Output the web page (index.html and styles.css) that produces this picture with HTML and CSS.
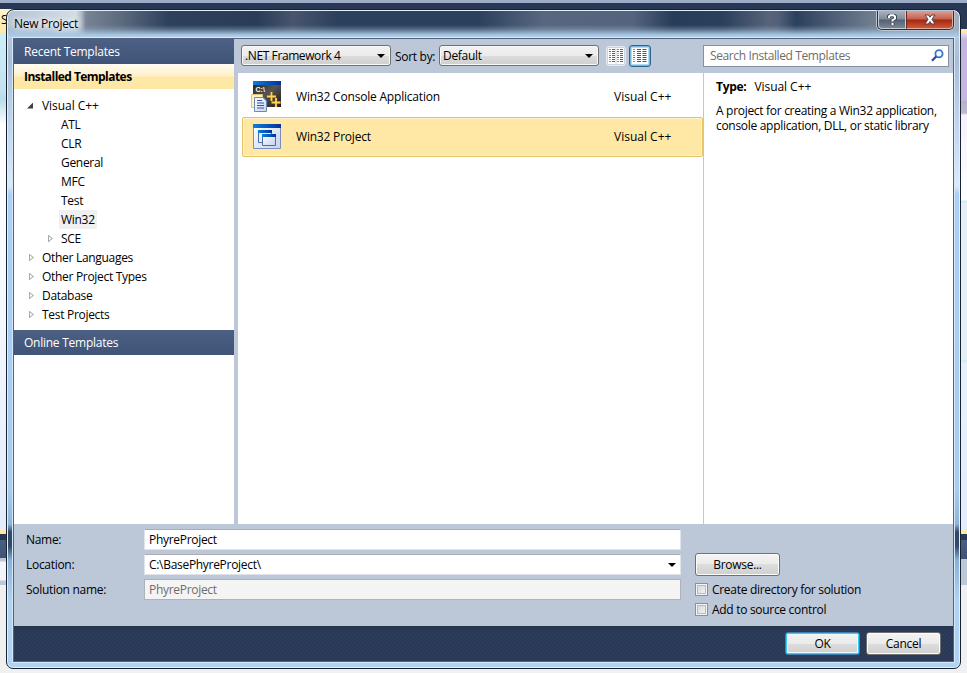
FILE: index.html
```
<!DOCTYPE html>
<html lang="en">
<head>
    <meta charset="UTF-8">
    <title>New Project</title>
    <link rel="stylesheet" href="styles.css">
</head>
<body>
<div class="desktop">
    <div class="behind">
        <div class="behindLeft">S</div>
        <div class="behindRight"></div>
    </div>

    <div class="window">
        <div class="titlebar">
            <div class="title">New Project</div>
            <div class="controls">
                <button class="help">
                    <svg width="12" height="12" viewBox="0 0 12 12"><path d="M3 4V2.5L4.5 1.2H7.5L9 2.5V4.5L6.5 6.3V7.5M6.5 9V11" fill="none" stroke="#3f4858" stroke-width="4"/><path d="M3 4V2.5L4.5 1.2H7.5L9 2.5V4.5L6.5 6.3V7.5M6.5 9V11" fill="none" stroke="#fff" stroke-width="2"/></svg>
                </button>
                <button class="close">
                    <svg width="12" height="11" viewBox="0 0 12 11"><path d="M1 1H4.3L6 3.2 7.7 1H11L8 5.3 11 10H7.7L6 7.6 4.3 10H1L4 5.3Z" fill="#fff" stroke="#4f4350" stroke-width="1"/></svg>
                </button>
            </div>
        </div>

        <div class="client">
            <div class="panes">
                <div class="sidebar">
                    <div class="band">Recent Templates</div>
                    <div class="band active">Installed Templates</div>
                    <ul class="tree">
                        <li class="open"><span>Visual C++</span></li>
                        <li class="sub"><span>ATL</span></li>
                        <li class="sub"><span>CLR</span></li>
                        <li class="sub"><span>General</span></li>
                        <li class="sub"><span>MFC</span></li>
                        <li class="sub"><span>Test</span></li>
                        <li class="sub selected"><span>Win32</span></li>
                        <li class="sub closed"><span>SCE</span></li>
                        <li class="closed"><span>Other Languages</span></li>
                        <li class="closed"><span>Other Project Types</span></li>
                        <li class="closed"><span>Database</span></li>
                        <li class="closed"><span>Test Projects</span></li>
                    </ul>
                    <div class="band">Online Templates</div>
                </div>

                <div class="main">
                    <div class="toolbar">
                        <div class="combo framework">.NET Framework 4</div>
                        <label>Sort by:</label>
                        <div class="combo sort">Default</div>
                        <button class="view small">
                            <svg width="16" height="16" viewBox="0 0 16 16">
                                <path d="M0 0H7.5V16H0ZM8.5 0H16V16H8.5Z" fill="#fff"/>
                                <path d="M2 1V15M10 1V15" stroke="#4fa58c" stroke-width="2" stroke-dasharray="1 5"/>
                                <path d="M2 3V15M10 3V15" stroke="#d8402c" stroke-width="2" stroke-dasharray="1 5"/>
                                <path d="M2 5V15M10 5V15" stroke="#e0b040" stroke-width="2" stroke-dasharray="1 5"/>
                                <path d="M5.5 1V15M13.5 1V15" stroke="#4a5cc0" stroke-width="3" stroke-dasharray="1 1"/>
                            </svg>
                        </button>
                        <button class="view medium">
                            <svg width="16" height="16" viewBox="0 0 16 16">
                                <path d="M0 0H16V16H0Z" fill="#fff"/>
                                <path d="M2 1V15" stroke="#4fa58c" stroke-width="2" stroke-dasharray="1 5"/>
                                <path d="M2 3V15" stroke="#d8402c" stroke-width="2" stroke-dasharray="1 5"/>
                                <path d="M2 5V15" stroke="#e0b040" stroke-width="2" stroke-dasharray="1 5"/>
                                <path d="M7 1V15M12.5 1V15" stroke="#3c4fb4" stroke-width="4" stroke-dasharray="1 1"/>
                            </svg>
                        </button>
                        <div class="search">
                            <span>Search Installed Templates</span>
                            <svg width="13" height="13" viewBox="0 0 13 13"><circle cx="8" cy="4.8" r="3.6" fill="#f4faff" stroke="#3a76c8" stroke-width="1.8"/><path d="M5.2 7.5L1 11.8" stroke="#2848a0" stroke-width="2.2"/></svg>
                        </div>
                    </div>

                    <div class="content">
                        <div class="list">
                            <div class="item">
                                <svg class="icon" width="32" height="32" viewBox="0 0 32 32">
                                    <defs>
                                        <linearGradient id="bar"><stop offset="0" stop-color="#0a80dc"/><stop offset="1" stop-color="#04309c"/></linearGradient>
                                        <linearGradient id="dark" x2="1" y2="1"><stop offset="0" stop-color="#222"/><stop offset=".5" stop-color="#555"/><stop offset="1" stop-color="#1c1c1c"/></linearGradient>
                                        <linearGradient id="paper" x2="1" y2="1"><stop offset="0" stop-color="#fff"/><stop offset="1" stop-color="#c4d3ee"/></linearGradient>
                                    </defs>
                                    <path d="M2 1H30V27H2Z" fill="url(#dark)"/>
                                    <path d="M2 1H30V5H2Z" fill="url(#bar)"/>
                                    <text x="4.5" y="12" class="prompt">C:\</text>
                                    <path d="M.5 14.5H11.5V27.5H.5Z" fill="#fff3b8" stroke="#dcc37a"/>
                                    <path d="M3.5 17.5H12L15.5 21V31.5H3.5Z" fill="url(#paper)" stroke="#7288b4"/>
                                    <path d="M6 20.5H11M6 23H13M6 25.5H13M6 28H13" stroke="#2c56b4"/>
                                    <path d="M20.5 12V21M16 16.5H25M25 18V27M20.5 22.5H29.5" stroke="#5f4310" stroke-width="3"/>
                                    <path d="M20.5 12V21M16 16.5H25M25 18V27M20.5 22.5H29.5" stroke="#ffd35a" stroke-width="1.8"/>
                                </svg>
                                <div class="name">Win32 Console Application</div>
                                <div class="lang">Visual C++</div>
                            </div>
                            <div class="item selected">
                                <svg class="icon" width="32" height="32" viewBox="0 0 32 32">
                                    <path d="M2.5 4.5H29.5V28.5H2.5Z" fill="url(#paper)" stroke="#7890b8"/>
                                    <path d="M2 4H30V8H2Z" fill="url(#bar)"/>
                                    <path d="M7.5 10.5H20.5V22.5H7.5Z" fill="#e4edfa" stroke="#4b6ca8"/>
                                    <path d="M7 10H21V13H7Z" fill="url(#bar)"/>
                                    <path d="M11.5 14.5H24.5V25.5H11.5Z" fill="url(#paper)" stroke="#4b6ca8"/>
                                    <path d="M11 14H25V17H11Z" fill="url(#bar)"/>
                                </svg>
                                <div class="name">Win32 Project</div>
                                <div class="lang">Visual C++</div>
                            </div>
                        </div>
                        <div class="details">
                            <div class="type"><b>Type:</b><span>Visual C++</span></div>
                            <p>A project for creating a Win32 application,<br>console application, DLL, or static library</p>
                        </div>
                    </div>
                </div>
            </div>

            <div class="form">
                <div class="fields">
                    <label>Name:</label>
                    <div class="input">PhyreProject</div>
                    <label>Location:</label>
                    <div class="input dropdown">C:\BasePhyreProject\</div>
                    <label>Solution name:</label>
                    <div class="input disabled">PhyreProject</div>
                </div>
                <div class="options">
                    <button class="button browse">Browse...</button>
                    <div class="check"><i></i>Create directory for solution</div>
                    <div class="check"><i></i>Add to source control</div>
                </div>
            </div>

            <div class="footer">
                <button class="button default">OK</button>
                <button class="button">Cancel</button>
            </div>
        </div>
    </div>
</div>
</body>
</html>
```
FILE: styles.css
```
* {
    box-sizing: border-box;
}
body {
    margin: 0;
    font-family: "Open Sans", "Noto Sans", sans-serif;
    font-size: 12px;
    letter-spacing: -0.3px;
    color: #000;
    overflow: hidden;
}
button {
    font: inherit;
    letter-spacing: inherit;
    padding: 0;
}
.desktop {
    width: 967px;
    height: 673px;
    display: grid;
    padding: 9px 6px 4px;
    position: relative;
    background: linear-gradient(#9dadc8 3px, #293955 3px, #293955 9px, #f0f0f0 9px);
}
/* the application showing round the edges of the dialog */
.behind {
    position: absolute;
    inset: 0;
    display: flex;
    justify-content: space-between;
}
.behindLeft {
    width: 14px;
    margin-top: 9px;
    padding: 2px 0 0 1px;
    background: linear-gradient(#fff4d0, #ffe8a6 24px, #cdeef8 24px, #c4e2ee 80px, #b9dcea 90px, #fff 116px, #f7faff 260px, #e3ecfc 521px, #ffe8a6 521px, #ffe8a6 525px, #293955 525px, #293955 531px, #4a5e82 531px, #3f5277 549px, #bcc7d8 549px, #bcc7d8 552px, #f4f5fb 553px, #f4f5fb 571px, #bcc7d8 572px, #bcc7d8 576px, #f0f0f0 576px);
}
.behindRight {
    width: 14px;
    background: linear-gradient(#9dadc8 3px, #293955 3px, #293955 29px, #ffe8a6 29px, #ffe8a6 33px, #eadcf6 33px, #c5b4e0 40px, #c6b6e2 100px, #b9b0cc 101px, #c0b8cf 113px, #f6f0fa 115px, #fff 200px, #c8ecf4 201px, #e5edf5 203px, #e5edf5 360px, #c8ecf4 361px, #e8effc 363px, #e3ecfc 530px, #ffe8a6 530px, #ffe8a6 534px, #293955 534px, #293955 540px, #4a5e82 540px, #3f5277 559px, #bcc7d8 559px, #bcc7d8 585px, #f0f0f0 585px);
}
.window {
    position: relative;
    width: 955px;
    height: 660px;
    padding: 0 6px 6px;
    border: 1px solid #17222f;
    border-radius: 8px 8px 7px 7px;
    box-shadow: inset 0 0 0 1px #e2f0fb;
    background:
        linear-gradient(#c5d2df, #a9bdd8 50px, #c6daf4 130px, #dce9fa 176px, #a9d0f8 184px, #a8ccf0 480px, #8eb4dc 514px, #34496a 522px, #34496a 536px, #8ab0d8 550px, #b0d2f4 590px, #b0d2f4);
}
.titlebar {
    height: 27px;
    margin: 1px -5px 0;
    padding-left: 6px;
    display: flex;
    justify-content: space-between;
    border-radius: 6px 6px 0 0;
    background:
        linear-gradient(transparent 14px, rgba(150, 175, 200, .35) 18px, #a8c6e2 24px, #b4d4f0),
        linear-gradient(90deg, #b4c3d3, #d4dde4 68px, #b4bdc7 73px, #788395 78px, #5f6d80 110px, #2d415d 160px, #293d58 250px, #48556c 285px, #2b405c 330px, #2b405c 470px, #58677f 535px, #55647e 625px, #263c58 665px, #2b405c 715px, #566378 760px, #53607a 770px, #2b405c 788px, #6d7a8d 860px, #a2adba 945px);
}
.title {
    margin-top: 4px;
    text-shadow: 0 0 6px #fff, 0 0 8px #fff;
}
.controls {
    display: flex;
    width: 77px;
    height: 19px;
    margin-right: 5px;
    border: 1px solid #26313f;
    border-top: 0;
    border-radius: 0 0 5px 5px;
    overflow: hidden;
    box-shadow: 0 0 0 1px #b8c5d2;
}
.controls button {
    display: flex;
    align-items: center;
    justify-content: center;
    border: 1px solid #c6cdd6;
    border-top: 0;
}
.help {
    width: 28px;
    border-radius: 0 0 0 4px;
    background: linear-gradient(#a9b1bc, #818c9a 8px, #536070 9px, #7c8796);
}
.close {
    flex: 1;
    border-radius: 0 0 4px 0;
    background: linear-gradient(#dca095, #c4604e 8px, #a22714 9px, #cf5735);
}
.controls .close {
    border-color: #e0aba0;
    border-left-color: #6b2820;
}
.client {
    height: 624px;
    border: 1px solid #53627a;
    box-shadow: 0 0 0 1px #d5e8f8;
    display: flex;
    flex-direction: column;
    background: #bcc7d8;
}
.panes {
    height: 485px;
    display: flex;
    gap: 4px;
}
.sidebar {
    width: 220px;
    background: #fff;
}
.band {
    height: 25px;
    padding-left: 10px;
    line-height: 25px;
    color: #fff;
    letter-spacing: -0.25px;
    background: linear-gradient(#4c5f84, #405478);
}
.band.active {
    color: #000;
    font-weight: bold;
    letter-spacing: -0.55px;
    background: linear-gradient(#fffcf2, #fff1ca 12px, #ffe8a6 13px, #ffe8a6);
}
.tree {
    list-style: none;
    margin: 0;
    padding: 7px 0 6px 12px;
}
.tree li {
    height: 19px;
    line-height: 19px;
    display: flex;
    align-items: center;
}
.tree li::before {
    content: "";
    width: 14px;
}
.tree span {
    padding: 0 2px;
}
.tree .sub {
    padding-left: 19px;
}
.tree .selected span {
    background: #f0f0f0;
}
.tree .open {
    letter-spacing: -0.05px;
}
.tree .open::before {
    width: 6px;
    height: 6px;
    margin: 0 7px 0 1px;
    background: #404040;
    clip-path: polygon(100% 0, 100% 100%, 0 100%);
}
.tree .closed::before {
    width: 5px;
    height: 8px;
    margin: 0 6px 0 3px;
    background: #aaa;
    clip-path: polygon(0 0, 100% 50%, 0 100%, 0 0, 1px 2px, 1px 6px, 3.5px 50%, 1px 2px);
}
.main {
    flex: 1;
}
.toolbar {
    height: 34px;
    display: flex;
    align-items: center;
    padding: 0 4px 1px 3px;
}
.combo {
    height: 21px;
    line-height: 19px;
    padding: 0 5px 0 3px;
    display: flex;
    align-items: center;
    justify-content: space-between;
    border: 1px solid #707070;
    border-radius: 3px;
    box-shadow: inset 0 0 0 1px #f8f8f8;
    background: linear-gradient(#f2f2f2, #ebebeb 50%, #dddddd 50%, #cfcfcf);
}
.combo::after, .dropdown::after {
    content: "";
    border: 4px solid transparent;
    border-top-color: #000;
    border-bottom: 0;
}
.framework {
    width: 150px;
    letter-spacing: -0.4px;
}
.sort {
    width: 160px;
}
.toolbar label {
    width: 48px;
    padding: 1px 0 0 4px;
}
.view {
    display: flex;
    align-items: center;
    justify-content: center;
    border-radius: 3px;
}
.small {
    width: 20px;
    height: 20px;
    margin: 0 3px 0 7px;
    border: 1px solid #e6eaf0;
    background: #cbd3e0;
}
.medium {
    width: 22px;
    height: 22px;
    border: 1px solid #2c628b;
    box-shadow: inset 0 0 1px 1px #6fb4d8;
    background: #b4dff4;
}
.search {
    width: 246px;
    height: 22px;
    margin-left: auto;
    padding: 0 4px 0 6px;
    display: flex;
    align-items: center;
    justify-content: space-between;
    letter-spacing: -0.38px;
    border: 1px solid #8591a2;
    background: #fff;
    color: #6d6d6d;
}
.content {
    height: 451px;
    display: flex;
    background: #fff;
}
.list {
    width: 465px;
    padding: 4px 0 0 4px;
}
.item {
    height: 40px;
    padding: 0 0 2px 9px;
    display: flex;
    align-items: center;
    border: 1px solid transparent;
    border-radius: 2px;
}
.item.selected {
    background: #ffe8a6;
    border-color: #e5c365;
    box-shadow: inset 0 0 0 1px #fff3cf;
}
.icon {
    margin: 0 13px 0 -1px;
}
.name {
    width: 318px;
    letter-spacing: -0.2px;
}
.lang {
    letter-spacing: 0;
}
.prompt {
    font: bold 7px "Liberation Sans", sans-serif;
    letter-spacing: 0;
    fill: #fff;
}
.details {
    flex: 1;
    padding: 6px 0 0 12px;
    border-left: 1px solid #bcc7d8;
}
.type {
    line-height: 16px;
}
.type b {
    margin-right: 8px;
}
.type span {
    letter-spacing: -0.05px;
}
.details p {
    margin: 8px 0 0;
    line-height: 15px;
    white-space: nowrap;
}
.form {
    height: 102px;
    padding: 5px 0 0 12px;
    display: flex;
    gap: 14px;
}
.fields {
    width: 655px;
    display: grid;
    grid-template-columns: 118px 537px;
    grid-auto-rows: 21px;
    row-gap: 4px;
    line-height: 21px;
}
.input {
    padding: 0 4px;
    line-height: 19px;
    background: #fff;
    border: 1px solid #dfe4ec;
    border-top-color: #abadb3;
}
.dropdown {
    display: flex;
    align-items: center;
    justify-content: space-between;
}
.disabled {
    color: #6d6d6d;
    background: #f4f4f4;
    border-color: #afb2b8;
}
.options {
    padding-top: 24px;
}
.button {
    width: 75px;
    height: 23px;
    border: 1px solid #707070;
    border-radius: 3px;
    box-shadow: inset 0 0 0 1px #fcfcfc;
    background: linear-gradient(#f3f3f3, #ebebeb 50%, #dddddd 50%, #cfcfcf);
}
.browse {
    display: block;
    width: 85px;
    margin-bottom: 3px;
}
.check {
    height: 20px;
    display: flex;
    align-items: center;
    gap: 4px;
}
.check i {
    width: 13px;
    height: 13px;
    border: 1px solid #8e8f8f;
    box-shadow: inset 0 0 0 1px #f4f4f4, inset 0 0 0 2px #b8bcc2;
    background: linear-gradient(135deg, #cfd3d8, #f6f6f6);
}
.footer {
    flex: 1;
    padding: 6px 12px 0 0;
    display: flex;
    justify-content: flex-end;
    gap: 6px;
    background:
        linear-gradient(#25334d, transparent 6px),
        radial-gradient(circle at 1px 1px, #31456a 0.5px, transparent 0.8px) 0 0 / 4px 4px,
        radial-gradient(circle at 3px 3px, #31456a 0.5px, transparent 0.8px) 0 0 / 4px 4px,
        #293955;
}
.default {
    border-color: #3c7fb1;
    box-shadow: inset 0 0 0 1px #2fd1fb, inset 0 0 0 2px #e8fbff;
}
```
